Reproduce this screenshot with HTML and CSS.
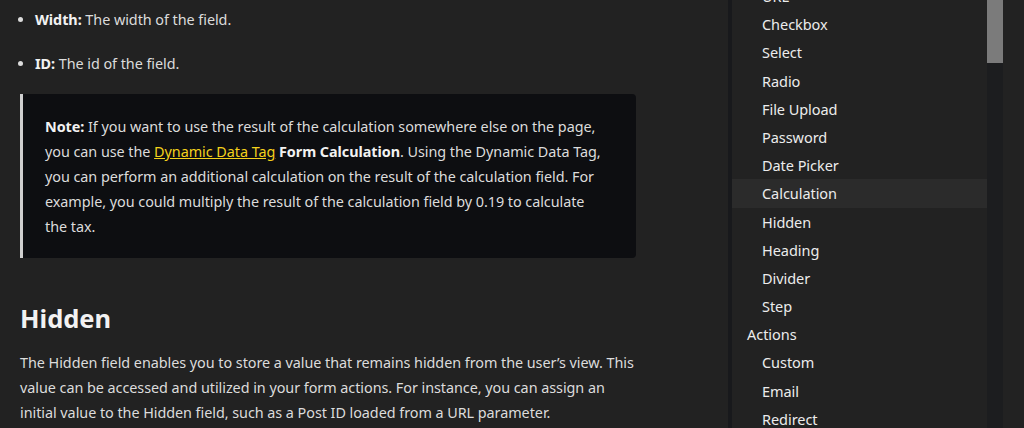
FILE: index.html
```html
<!DOCTYPE html>
<html lang="en">
<head>
<meta charset="utf-8">
<title>Calculation field</title>
<link rel="stylesheet" href="styles.css">
</head>
<body>
<main class="main">
  <ul class="props">
    <li><strong>Width:</strong> The width of the field.</li>
    <li><strong>ID:</strong> The id of the field.</li>
  </ul>
  <blockquote class="note">
    <p><strong>Note:</strong> If you want to use the result of the calculation somewhere else on the page, you can use the <a href="#">Dynamic Data Tag</a> <strong>Form Calculation</strong>. Using the Dynamic Data Tag, you can perform an additional calculation on the result of the calculation field. For example, you could multiply the result of the calculation field by 0.19 to calculate the tax.</p>
  </blockquote>
  <h2 class="title">Hidden</h2>
  <p class="text">The Hidden field enables you to store a value that remains hidden from the user’s view. This value can be accessed and utilized in your form actions. For instance, you can assign an initial value to the Hidden field, such as a Post ID loaded from a URL parameter.</p>
</main>
<aside class="side">
  <nav class="toc">
    <ul class="toc-list">
      <li class="sub">URL</li>
      <li class="sub">Checkbox</li>
      <li class="sub">Select</li>
      <li class="sub">Radio</li>
      <li class="sub">File Upload</li>
      <li class="sub">Password</li>
      <li class="sub">Date Picker</li>
      <li class="sub active">Calculation</li>
      <li class="sub">Hidden</li>
      <li class="sub">Heading</li>
      <li class="sub">Divider</li>
      <li class="sub">Step</li>
      <li class="top">Actions</li>
      <li class="sub">Custom</li>
      <li class="sub">Email</li>
      <li class="sub">Redirect</li>
    </ul>
  </nav>
  <div class="scrollbar"><div class="thumb"></div></div>
</aside>
</body>
</html>
```

FILE: styles.css
```css
html, body {
  margin: 0;
  padding: 0;
  height: 100%;
  background: #222222;
  overflow: hidden;
}
body {
  display: flex;
  font-family: "Noto Sans", "Open Sans", sans-serif;
  font-size: 14.4px;
  letter-spacing: -0.05px;
  color: #dcdcdc;
}
.main {
  width: 616px;
  padding: 7px 92px 0 20px;
  flex: none;
}
.props {
  margin: 0;
  padding-left: 15px;
  line-height: 25px;
}
.props li {
  margin-bottom: 19px;
}
.props li:last-child {
  margin-bottom: 0;
}
strong {
  color: #f2f2f2;
  font-weight: 700;
}
.note {
  margin: 18px 0 0;
  background: #0d0e11;
  border-left: 3px solid #cfcfcf;
  border-radius: 0 4px 4px 0;
  padding: 20px 30px 19px 22px;
}
.note p {
  margin: 0;
  line-height: 25px;
}
.note a {
  color: #f4d21c;
  text-decoration: underline;
}
.title {
  margin: 43px 0 0;
  font-size: 25.5px;
  line-height: 34px;
  font-weight: 700;
  color: #f2f2f2;
  letter-spacing: 0;
}
.text {
  margin: 15px -4px 0 0;
  line-height: 25px;
}
.side {
  flex: 1;
  display: flex;
  border-left: 4px solid #18191c;
  height: 100%;
}
.toc {
  width: 255px;
  flex: none;
}
.toc-list {
  list-style: none;
  margin: -18px 0 0;
  padding: 0;
  font-size: 14.5px;
  color: #ececec;
}
.toc-list li {
  height: 28.2px;
  line-height: 28.2px;
}
.toc-list .sub {
  padding-left: 30px;
}
.toc-list .top {
  padding-left: 15px;
}
.toc-list .active {
  background: #2b2b2b;
}
.scrollbar {
  width: 16px;
  flex: none;
  background: #1c1d1f;
  height: 100%;
}
.thumb {
  height: 63px;
  background: #7b7b7b;
}
```
